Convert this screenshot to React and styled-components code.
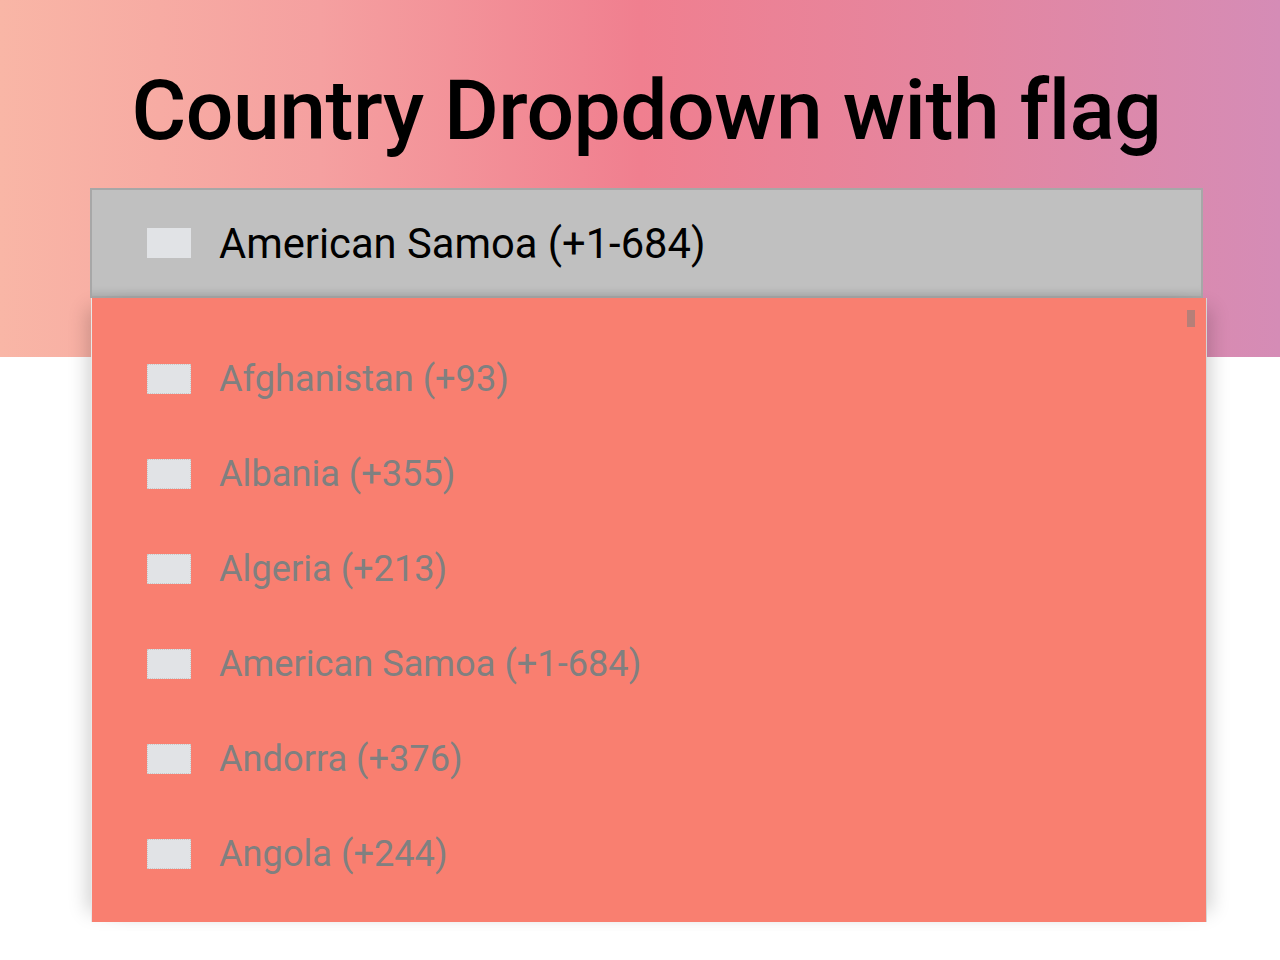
import React from 'react';
import styled, { createGlobalStyle } from 'styled-components';

const GlobalStyle = createGlobalStyle`
  html, body {
    margin: 0;
    padding: 0;
    background: #fff;
    font-family: Roboto, "Liberation Sans", sans-serif;
  }
`

const Page = styled.div`
  position: relative;
  width: 1280px;
  height: 960px;
  overflow: hidden;
`

const Hero = styled.div`
  height: 357px;
  background: linear-gradient(90deg, #f9b6a6 0%, #f5a0a0 25%, #f07f8f 50%, #e486a0 75%, #d58cb6 100%);
`

const Content = styled.div`
  position: absolute;
  top: 0;
  left: 90px;
  width: 1113px;
`

const Title = styled.h1`
  margin: 0;
  padding-top: 61px;
  height: 188px;
  box-sizing: border-box;
  text-align: center;
  font-size: 84px;
  font-weight: 500;
  line-height: 100px;
  color: #000;
  letter-spacing: -0.5px;
  white-space: nowrap;
`

const Select = styled.div`
  position: relative;
  height: 110px;
  box-sizing: border-box;
  border: 2px solid #a7a7a7;
  background: #c0c0c0;
  box-shadow: inset 0 -10px 10px -8px rgba(0, 0, 0, 0.12);
  display: flex;
  align-items: center;
  padding-left: 55px;
  gap: 28px;
  font-size: 41.7px;
  color: #000;
`

const Flag = styled.span`
  flex: none;
  width: 44px;
  height: 30px;
  box-sizing: border-box;
  background: #e1e3e6;
  border: 1px dotted ${p => (p.outlined ? '#c9c9c9' : '#e1e3e6')};
`

const Menu = styled.ul`
  position: absolute;
  top: 298px;
  left: 91px;
  width: 1116px;
  height: 624px;
  box-sizing: border-box;
  margin: 0;
  padding: 33px 0 0;
  list-style: none;
  background: #f97f70;
  border-left: 1px solid #e8e8e8;
  border-right: 1px solid #d6d6d6;
  box-shadow: -14px 0 18px -10px rgba(0, 0, 0, 0.18), 14px 0 18px -10px rgba(0, 0, 0, 0.18);
  overflow: hidden;
`

const Thumb = styled.div`
  position: absolute;
  top: 12px;
  right: 11px;
  width: 8px;
  height: 17px;
  background: rgba(128, 128, 128, 0.55);
`

const Item = styled.li`
  height: 95px;
  display: flex;
  align-items: center;
  padding-left: 55px;
  gap: 28px;
  font-size: 36.2px;
  color: #808080;
`

const countries = [
  'Afghanistan (+93)',
  'Albania (+355)',
  'Algeria (+213)',
  'American Samoa (+1-684)',
  'Andorra (+376)',
  'Angola (+244)',
]

export default function App() {
  return (
    <Page>
      <GlobalStyle />
      <Hero />
      <Content>
        <Title>Country Dropdown with flag</Title>
        <Select>
          <Flag />
          <span>American Samoa (+1-684)</span>
        </Select>
      </Content>
      <Menu>
        <Thumb />
        {countries.map(name => (
          <Item key={name}>
            <Flag outlined />
            <span>{name}</span>
          </Item>
        ))}
      </Menu>
    </Page>
  )
}
